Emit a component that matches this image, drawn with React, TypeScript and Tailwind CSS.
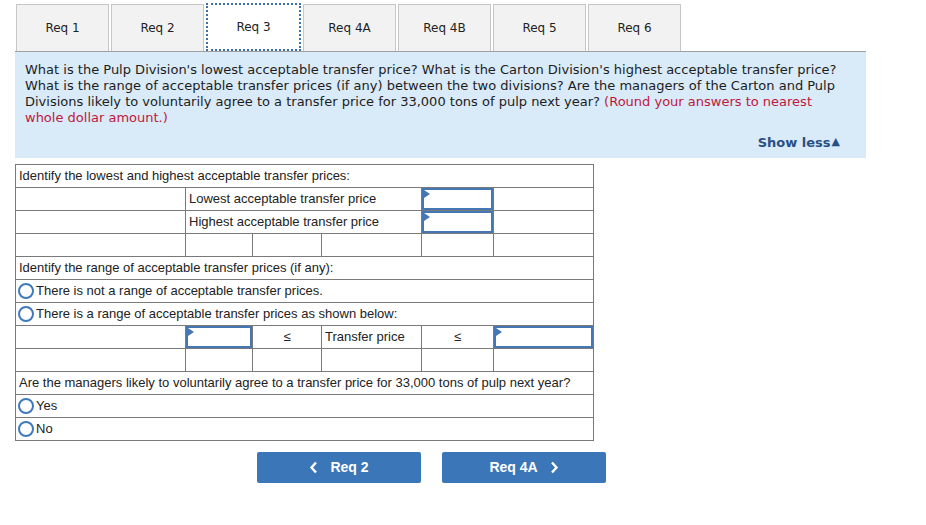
import React from "react"

const tabs = ["Req 1", "Req 2", "Req 3", "Req 4A", "Req 4B", "Req 5", "Req 6"]

const Tab = ({ label, active }: { label: string; active?: boolean }) => {
  if (active) {
    return (
      <div className="w-[95px] h-[48px] bg-white border-2 border-dotted border-[#3d6eb0] flex items-center justify-center text-[12px] text-[#222]">
        {label}
      </div>
    )
  }
  return (
    <div className="w-[93px] h-[47px] mt-[1px] bg-[#f2f2f2] border border-[#c6c6c6] border-b-0 flex items-center justify-center text-[12px] text-[#222]">
      {label}
    </div>
  )
}

const Cell = ({ children, span, className = "" }: { children?: React.ReactNode; span?: number; className?: string }) => (
  <td colSpan={span} className={"border border-[#7a7a7a] h-[23px] px-[3px] py-0 align-middle " + className}>
    {children}
  </td>
)

const InputCell = () => (
  <td className="border border-[#7a7a7a] h-[23px] p-0">
    <div className="relative h-[22px] border-2 border-[#4677b5]">
      <div className="absolute left-0 top-0 w-0 h-0 border-t-[4px] border-b-[4px] border-l-[6px] border-t-transparent border-b-transparent border-l-[#4677b5]" />
    </div>
  </td>
)

const Radio = ({ label }: { label: string }) => (
  <div className="flex items-center">
    <span className="inline-block w-[16px] h-[16px] rounded-full border-2 border-[#3f79bd] mr-[2px] -ml-[1px]" />
    <span>{label}</span>
  </div>
)

const EmptyRow = () => (
  <tr>
    <Cell />
    <Cell />
    <Cell />
    <Cell />
    <Cell />
    <Cell />
  </tr>
)

export default function App() {
  return (
    <div className="w-[926px] h-[525px] bg-white pl-[15px] pt-[3px]" style={{ fontFamily: "Verdana, 'DejaVu Sans', sans-serif" }}>
      <div className="flex items-end gap-[2px] pl-[1px] h-[48px]">
        {tabs.map((t) => (
          <Tab key={t} label={t} active={t === "Req 3"} />
        ))}
      </div>

      <div className="w-[851px] h-[107px] bg-[#d9eaf8] border-t border-[#a0a0a0] pl-[10px] pt-[10px] relative">
        <p className="text-[13px] leading-[16px] text-[#1d1d1d] whitespace-nowrap">
          What is the Pulp Division's lowest acceptable transfer price? What is the Carton Division's highest acceptable transfer price?
          <br />
          What is the range of acceptable transfer prices (if any) between the two divisions? Are the managers of the Carton and Pulp
          <br />
          Divisions likely to voluntarily agree to a transfer price for 33,000 tons of pulp next year?{" "}
          <span className="text-[#c0183c]">(Round your answers to nearest</span>
          <br />
          <span className="text-[#c0183c]">whole dollar amount.)</span>
        </p>
        <div className="absolute right-[26px] bottom-[6px] text-[13px] font-bold text-[#284f86] flex items-center">
          Show less<span className="text-[11px] ml-[1px]">▲</span>
        </div>
      </div>

      <table
        className="mt-[6px] border-collapse text-[13px] text-[#222] table-fixed"
        style={{ fontFamily: "'Liberation Sans', Arial, sans-serif" }}
      >
        <colgroup>
          <col className="w-[170px]" />
          <col className="w-[67px]" />
          <col className="w-[69px]" />
          <col className="w-[100px]" />
          <col className="w-[72px]" />
          <col className="w-[100px]" />
        </colgroup>
        <tbody>
          <tr>
            <Cell span={6}>Identify the lowest and highest acceptable transfer prices:</Cell>
          </tr>
          <tr>
            <Cell />
            <Cell span={3}>Lowest acceptable transfer price</Cell>
            <InputCell />
            <Cell />
          </tr>
          <tr>
            <Cell />
            <Cell span={3}>Highest acceptable transfer price</Cell>
            <InputCell />
            <Cell />
          </tr>
          <EmptyRow />
          <tr>
            <Cell span={6}>Identify the range of acceptable transfer prices (if any):</Cell>
          </tr>
          <tr>
            <Cell span={6}>
              <Radio label="There is not a range of acceptable transfer prices." />
            </Cell>
          </tr>
          <tr>
            <Cell span={6}>
              <Radio label="There is a range of acceptable transfer prices as shown below:" />
            </Cell>
          </tr>
          <tr>
            <Cell />
            <InputCell />
            <Cell className="text-center">≤</Cell>
            <Cell>Transfer price</Cell>
            <Cell className="text-center">≤</Cell>
            <InputCell />
          </tr>
          <EmptyRow />
          <tr>
            <Cell span={6}>Are the managers likely to voluntarily agree to a transfer price for 33,000 tons of pulp next year?</Cell>
          </tr>
          <tr>
            <Cell span={6}>
              <Radio label="Yes" />
            </Cell>
          </tr>
          <tr>
            <Cell span={6}>
              <Radio label="No" />
            </Cell>
          </tr>
        </tbody>
      </table>

      <div className="flex gap-[21px] ml-[242px] mt-[11px]" style={{ fontFamily: "'Liberation Sans', Arial, sans-serif" }}>
        <button className="w-[164px] h-[31px] bg-[#3b76b9] rounded-[2px] text-white font-bold text-[14px] flex items-center justify-center gap-[12px]">
          <svg width="9" height="13" viewBox="0 0 9 13">
            <polyline points="7,1.5 2.5,6.5 7,11.5" fill="none" stroke="white" strokeWidth="2.4" />
          </svg>
          <span>Req 2</span>
        </button>
        <button className="w-[164px] h-[31px] bg-[#3b76b9] rounded-[2px] text-white font-bold text-[14px] flex items-center justify-center gap-[12px]">
          <span>Req 4A</span>
          <svg width="9" height="13" viewBox="0 0 9 13">
            <polyline points="2,1.5 6.5,6.5 2,11.5" fill="none" stroke="white" strokeWidth="2.4" />
          </svg>
        </button>
      </div>
    </div>
  )
}
